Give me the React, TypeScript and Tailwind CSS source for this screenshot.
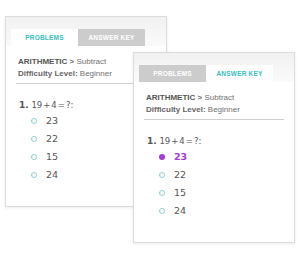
const options = ['23', '22', '15', '24'];

type CardProps = {
  active: 'problems' | 'answer';
  answer?: string;
  className?: string;
};

const Card = ({ active, answer, className }: CardProps) => {
  const tabOn = 'bg-white text-[#3bbdbd]';
  const tabOff = 'bg-[#cccccc] text-white';
  return (
    <div
      className={`w-[162px] h-[191px] shrink-0 bg-white border border-[#dcdcdc] shadow-[0_1px_3px_rgba(0,0,0,0.08)] ${className ?? ''}`}
    >
      {/* Tabs */}
      <div className="h-[29px] pt-[11px] px-[5px] flex items-end bg-gradient-to-b from-[#f1f1f1] to-[#fafafa]">
        <div
          className={`w-[67px] h-[17px] flex items-center justify-center text-[6.5px] font-bold tracking-[0.2px] ${active === 'problems' ? tabOn : tabOff}`}
        >
          PROBLEMS
        </div>
        <div
          className={`w-[67px] h-[17px] flex items-center justify-center text-[6.5px] font-bold tracking-[0.2px] ${active === 'answer' ? tabOn : tabOff}`}
        >
          ANSWER KEY
        </div>
      </div>

      {/* Meta */}
      <div className="px-[10px] pt-[10px]">
        <div className="px-[2px] pb-[3px] border-b border-[#cfcfcf] text-[8px] leading-[12px] text-[#707070]">
          <div>
            <span className="font-bold text-[#555]">ARITHMETIC</span> <span className="font-bold">&gt;</span> Subtract
          </div>
          <div>
            <span className="font-bold text-[#666]">Difficulty Level:</span> Beginner
          </div>
        </div>
      </div>

      {/* Question */}
      <div className="pl-[13px] pt-[15px] font-['DejaVu_Sans',sans-serif] text-[#555]">
        <div className="text-[8.5px] leading-[12px]">
          <span className="font-bold text-[9px]">1.</span> 19<span className="mx-[1px]">+</span>4<span className="mx-[1px]">=</span>?:
        </div>
        <div className="mt-[1px] pl-[12px] flex flex-col">
          {options.map((o) => {
            const sel = o === answer;
            return (
              <div key={o} className="h-[18px] flex items-center gap-[9px]">
                <span
                  className={`w-[6px] h-[6px] rounded-full ${sel ? 'bg-[#a63ad8]' : 'border border-[#8fcfcf]'}`}
                />
                <span
                  className={`text-[9.5px] ${sel ? 'font-bold text-[#a63ad8]' : 'text-[#555]'}`}
                >
                  {o}
                </span>
              </div>
            );
          })}
        </div>
      </div>
    </div>
  );
};

export default function App() {
  return (
    <div className="w-[300px] h-[259px] bg-white overflow-hidden font-['Liberation_Sans',Arial,sans-serif]">
      <div className="flex items-start pl-[5px] pt-[16px]">
        <Card active="problems" />
        <Card active="answer" answer="23" className="relative ml-[-34px] mt-[36px]" />
      </div>
    </div>
  );
}
